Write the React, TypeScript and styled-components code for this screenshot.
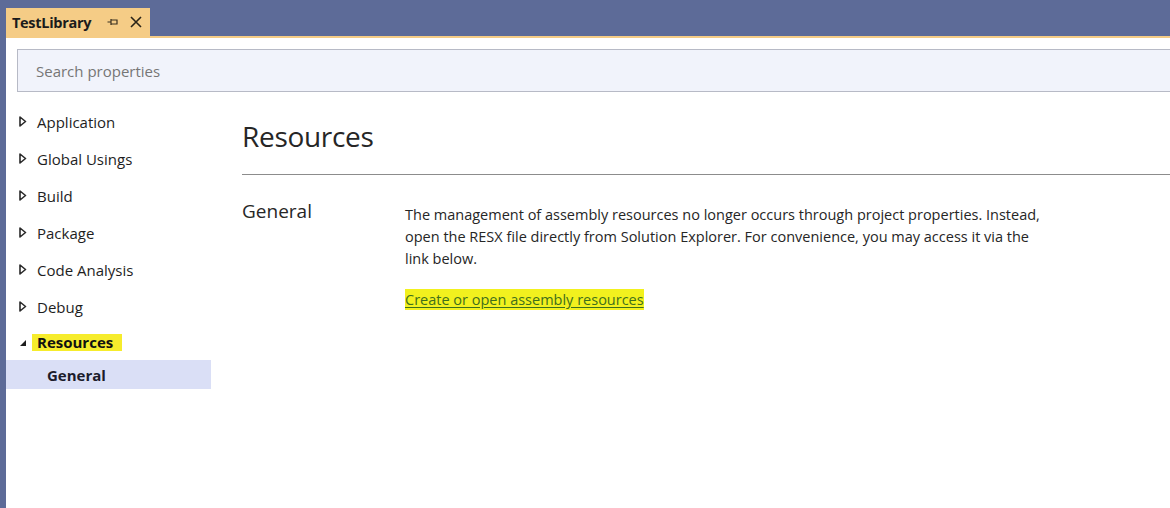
import { FunctionComponent } from 'react'

import styled, { createGlobalStyle } from 'styled-components'

const GlobalStyle = createGlobalStyle`
    html, body {
        margin: 0;
        padding: 0;
        background: #fff;
    }
    body {
        font-family: 'Open Sans', 'Noto Sans', 'Liberation Sans', sans-serif;
        color: #1e1e1e;
    }
`

const navItems = ['Application', 'Global Usings', 'Build', 'Package', 'Code Analysis', 'Debug']

const Window = styled.div`
    display: flex;
    flex-direction: column;
    height: 508px;
    padding-left: 6px;
    background: #5d6b98;
    overflow: hidden;
`

const TabStrip = styled.div`
    display: flex;
    height: 28px;
    padding-top: 8px;
`

const Tab = styled.div`
    display: flex;
    align-items: center;
    width: 144px;
    padding-left: 6px;
    box-sizing: border-box;
    background: #f5cc86;
    font-size: 14.5px;
    font-weight: 700;
    letter-spacing: -0.3px;
    color: #1b1b1b;
`

const TabTitle = styled.span`
    flex: 1;
`

const TabButton = styled.span`
    display: flex;
    align-items: center;
    justify-content: center;
    width: 18px;
    height: 18px;
    margin-right: 5px;
`

const Accent = styled.div`
    height: 2px;
    background: #f5cc86;
`

const Surface = styled.div`
    flex: 1;
    display: flex;
    flex-direction: column;
    background: #fff;
`

const SearchBox = styled.div`
    display: flex;
    align-items: center;
    height: 41px;
    margin: 11px 0 0 11px;
    padding-left: 18px;
    border: 1px solid #b7bac6;
    border-right: none;
    background: #f1f3fb;
    font-size: 15px;
    color: #767676;
`

const Body = styled.div`
    flex: 1;
    display: flex;
`

const Sidebar = styled.nav`
    width: 205px;
    padding-top: 11px;
`

const NavRow = styled.div<{ $height?: number }>`
    display: flex;
    align-items: center;
    height: ${({ $height }): number => $height ?? 37}px;
    padding-left: 13px;
    font-size: 15px;
    color: #1e1e1e;
`

const Caret = styled.span`
    display: flex;
    width: 18px;
`

const Highlight = styled.span`
    margin-left: -5px;
    padding: 0 9px 0 5px;
    background: #f6ec2c;
    font-weight: 700;
    line-height: 17px;
    color: #111;
`

const SubRow = styled.div`
    display: flex;
    align-items: center;
    height: 29px;
    padding-left: 41px;
    background: #dadff6;
    font-size: 15px;
    font-weight: 700;
    color: #1c1c2c;
`

const Main = styled.main`
    flex: 1;
    padding-left: 31px;
`

const Heading = styled.h1`
    margin: 0;
    padding-top: 24px;
    height: 82px;
    box-sizing: border-box;
    font-size: 28px;
    font-weight: 400;
    line-height: 40px;
    color: #262626;
    letter-spacing: -0.3px;
`

const Rule = styled.hr`
    margin: 0;
    border: none;
    border-top: 1px solid #8c8c8c;
`

const Section = styled.section`
    display: grid;
    grid-template-columns: 163px 650px;
    padding-top: 24px;
`

const SectionLabel = styled.div`
    font-size: 19px;
    line-height: 24px;
    color: #262626;
`

const Description = styled.p`
    margin: 5px 0 0;
    font-size: 14.5px;
    line-height: 22px;
    color: #262626;
`

const LinkLine = styled.div`
    margin-top: 19px;
    font-size: 14.5px;
    line-height: 22px;
`

const Link = styled.a`
    padding: 1px 0;
    background: #f2f11e;
    color: #3f6f1c;
    text-decoration: underline;
    text-underline-offset: 2px;
`

const ClosedCaret: FunctionComponent = () => (
    <svg width="8" height="11" viewBox="0 0 8 11">
        <path d="M1 1 L6.5 5.5 L1 10 Z" fill="none" stroke="#2a2a2a" strokeWidth="1.6" strokeLinejoin="round" />
    </svg>
)

const OpenCaret: FunctionComponent = () => (
    <svg width="8" height="8" viewBox="0 0 8 8">
        <path d="M7 1 L7 7 L1 7 Z" fill="#1e1e1e" />
    </svg>
)

const App: FunctionComponent = () => (
    <>
        <GlobalStyle />
        <Window>
            <TabStrip>
                <Tab>
                    <TabTitle>TestLibrary</TabTitle>
                    <TabButton>
                        <svg width="12" height="10" viewBox="0 0 12 10">
                            <path d="M0.5 5 H4 M4 2 V8 M4 3 H10 V7 H4" fill="none" stroke="#3a3020" strokeWidth="1.2" />
                        </svg>
                    </TabButton>
                    <TabButton>
                        <svg width="12" height="12" viewBox="0 0 12 12">
                            <path d="M1 1 L11 11 M11 1 L1 11" stroke="#2a2418" strokeWidth="1.6" />
                        </svg>
                    </TabButton>
                </Tab>
            </TabStrip>
            <Accent />
            <Surface>
                <SearchBox>Search properties</SearchBox>
                <Body>
                    <Sidebar>
                        {navItems.map((item) => (
                            <NavRow key={item}>
                                <Caret>
                                    <ClosedCaret />
                                </Caret>
                                {item}
                            </NavRow>
                        ))}
                        <NavRow $height={35}>
                            <Caret>
                                <OpenCaret />
                            </Caret>
                            <Highlight>Resources</Highlight>
                        </NavRow>
                        <SubRow>General</SubRow>
                    </Sidebar>
                    <Main>
                        <Heading>Resources</Heading>
                        <Rule />
                        <Section>
                            <SectionLabel>General</SectionLabel>
                            <div>
                                <Description>
                                    The management of assembly resources no longer occurs through project properties.
                                    Instead, open the RESX file directly from Solution Explorer. For convenience, you may
                                    access it via the link below.
                                </Description>
                                <LinkLine>
                                    <Link href="#">Create or open assembly resources</Link>
                                </LinkLine>
                            </div>
                        </Section>
                    </Main>
                </Body>
            </Surface>
        </Window>
    </>
)

export default App
